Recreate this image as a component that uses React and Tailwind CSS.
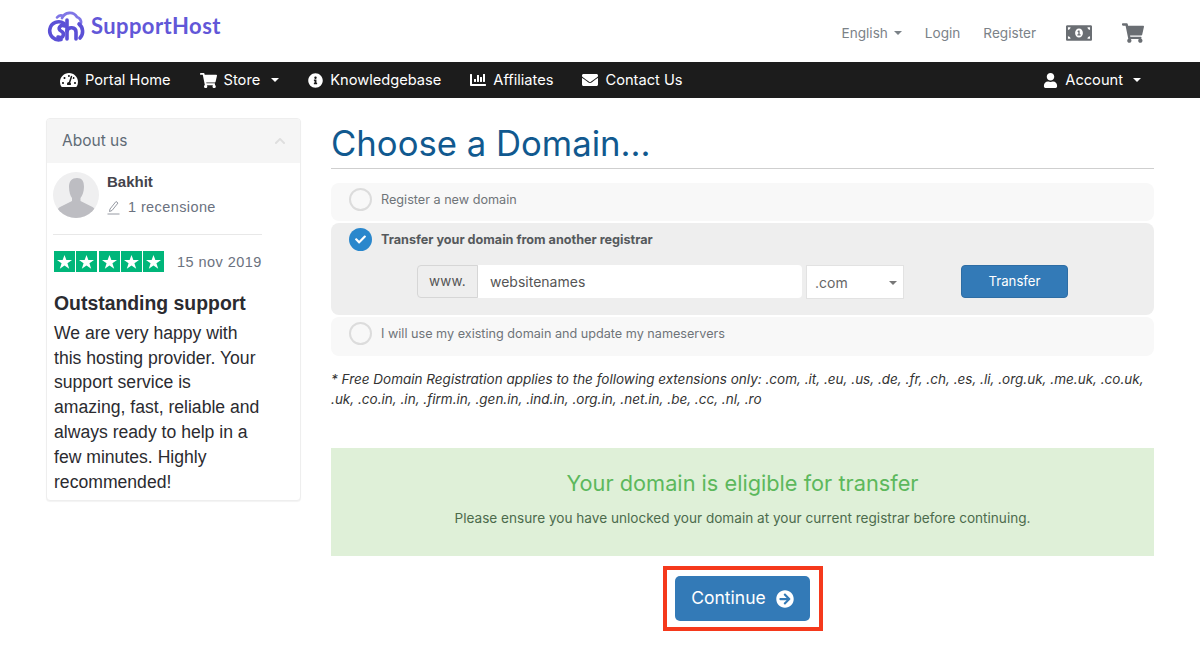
import { FaTachometerAlt, FaShoppingCart, FaInfoCircle, FaChartBar, FaEnvelope, FaUser, FaMoneyBillAlt, FaArrowCircleRight, FaCheck, FaChevronUp } from "react-icons/fa";

const navItems = [
  { label: "Portal Home", icon: FaTachometerAlt, size: 18 },
  { label: "Store", icon: FaShoppingCart, size: 17, caret: true },
  { label: "Knowledgebase", icon: FaInfoCircle, size: 15 },
  { label: "Affiliates", icon: FaChartBar, size: 16 },
  { label: "Contact Us", icon: FaEnvelope, size: 16 },
];

const reviewLines = [
  "We are very happy with",
  "this hosting provider. Your",
  "support service is",
  "amazing, fast, reliable and",
  "always ready to help in a",
  "few minutes. Highly",
  "recommended!",
];

function Caret({ className }) {
  return <span className={`inline-block w-0 h-0 border-x-[4px] border-x-transparent border-t-[4px] ${className}`} />;
}

function Logo() {
  return (
    <svg width="39" height="32" viewBox="0 0 39 32" fill="none" stroke="#5b50d6" strokeWidth="3.6" strokeLinecap="round">
      <path d="M11 7.500a5 5 0 0 1 5-2" stroke="#7f75e6" strokeWidth="2.6" />
      <path d="M16 8a8.500 8.500 0 0 1 15 -1 6 6 0 0 1 4 6" stroke="#7f75e6" strokeWidth="2.8" />
      <path d="M18 13.500a9 9 0 1 0 -3 16" />
      <path d="M19 16c-5-2-8 3-4 5s3 8-3 6" />
      <path d="M21 10v19" />
      <path d="M21 21c1-4.500 9-4.500 9 1v7" />
      <path d="M33 14a9.500 9.500 0 0 1 1 14" />
    </svg>
  );
}

function Radio({ checked }) {
  if (checked) {
    return (
      <span className="w-[23px] h-[23px] rounded-full bg-[#2a87cc] flex items-center justify-center shrink-0">
        <FaCheck size={11} color="#fff" />
      </span>
    );
  }
  return <span className="w-[23px] h-[23px] rounded-full bg-[#f8f8f8] border-2 border-[#dcdcdc] shrink-0" />;
}

function Avatar() {
  return (
    <svg width="46" height="46" viewBox="0 0 46 46" className="shrink-0">
      <clipPath id="avatar-clip"><circle cx="23" cy="23" r="23" /></clipPath>
      <circle cx="23" cy="23" r="23" fill="#efeff0" />
      <g clipPath="url(#avatar-clip)" fill="#bdbdc2">
        <path d="M16 15c0-6 3-9 8-9s7 3 7 9c0 5-2 9-3.500 11v3l12 6c3 2 4 6 4 11H3c0-5 1-9 4-11l12-6v-3c-1.500-2-3-6-3-11z" />
      </g>
    </svg>
  );
}

function Stars() {
  return (
    <div className="flex gap-[1.25px]">
      {[0, 1, 2, 3, 4].map((i) => (
        <span key={i} className="w-[21px] h-[21px] bg-[#00b67a] flex items-center justify-center">
          <svg width="15" height="15" viewBox="0 0 24 24" fill="#fff">
            <path d="M12 1.500l3 8h9l-7.300 5.300 2.800 8.700L12 18.200l-7.500 5.300 2.800-8.700L0 9.500h9z" />
          </svg>
        </span>
      ))}
    </div>
  );
}

function Sidebar() {
  return (
    <aside className="w-[255px] shrink-0 mt-5 h-[383px] bg-white border border-[#eeeeee] rounded-[4px] shadow-[0_1px_1px_rgba(0,0,0,0.05)] overflow-hidden">
      <div className="h-[44px] bg-[#f5f5f5] pl-[15px] pr-[14px] flex items-center justify-between">
        <span className="text-[15.5px] text-[#5f6b75]">About us</span>
        <FaChevronUp size={12} color="#dedede" />
      </div>
      <div className="px-[6px] pt-[9px]">
        <div className="flex gap-2 w-[209px] h-[63px] border-b border-[#e8e8e8]">
          <Avatar />
          <div className="pt-[1px]">
            <div className="text-[15px] leading-[18px] font-semibold text-[#44444c] font-['Liberation_Sans',sans-serif]">Bakhit</div>
            <div className="mt-[7px] flex items-center gap-2 text-[14.5px] leading-[18px] text-[#6b7280] tracking-[0.4px] font-['Liberation_Sans',sans-serif]">
              <svg width="13" height="15" viewBox="0 0 13 15" fill="none" stroke="#8a8f98" strokeWidth="0.9">
                <path d="M3 9l6-7.500 2 1.500-6 7.500-2.500 1z" />
                <path d="M0.500 14h12" />
              </svg>
              1 recensione
            </div>
          </div>
        </div>
        <div className="mt-[15px] ml-[1px] flex items-center gap-[13px]">
          <Stars />
          <span className="pt-[2px] text-[14.5px] text-[#6b7280] tracking-[0.45px] font-['Liberation_Sans',sans-serif]">15 nov 2019</span>
        </div>
        <h3 className="mt-[17px] ml-[1px] text-[19.4px] leading-[24px] font-bold text-[#2b2b30] font-['Liberation_Sans',sans-serif] whitespace-nowrap">Outstanding support</h3>
        <div className="mt-[6px] ml-[1px] text-[17.6px] leading-[24.8px] text-[#2b2b30] font-['Liberation_Sans',sans-serif] whitespace-nowrap">
          {reviewLines.map((line) => (
            <p key={line}>{line}</p>
          ))}
        </div>
      </div>
    </aside>
  );
}

function DomainOptions() {
  return (
    <div className="mt-[14px] flex flex-col gap-[2px]">
      <div className="h-[38px] bg-[#f8f8f8] rounded-lg pl-[18px] pt-[5px] flex items-start gap-[9px] text-[12.65px] leading-[24px] text-[#6f7478]">
        <Radio />
        Register a new domain
      </div>
      <div className="h-[92px] bg-[#eeeeee] rounded-lg pl-[18px] pt-[5px]">
        <div className="h-[23px] flex items-start gap-[9px] text-[12.65px] leading-[24px] font-bold text-[#55595c]">
          <Radio checked />
          Transfer your domain from another registrar
        </div>
        <div className="mt-[14px] ml-[68px] flex items-start">
          <span className="w-[61px] h-[33px] bg-[#eeeeee] border border-[#d6d6d6] rounded-l-[4px] flex items-center justify-center text-[13.5px] tracking-[0.2px] text-[#555]">www.</span>
          <span className="w-[324px] h-[33px] bg-white rounded-r-[4px] pl-3 flex items-center text-[14px] text-[#555]">websitenames</span>
          <span className="ml-1 w-[98px] h-[34px] bg-white border border-[#e2e2e2] pl-2 pr-[6px] flex items-center justify-between text-[14px] text-[#666]">
            .com
            <Caret className="border-t-[#777] mt-[1px]" />
          </span>
          <button className="ml-[57px] w-[107px] h-[33px] bg-[#337ab7] border border-[#2e6da4] rounded-[4px] text-[13.2px] text-white">Transfer</button>
        </div>
      </div>
      <div className="h-[39px] bg-[#f8f8f8] rounded-lg pl-[18px] pt-[5px] flex items-start gap-[9px] text-[12.65px] leading-[24px] text-[#6f7478]">
        <Radio />
        I will use my existing domain and update my nameservers
      </div>
    </div>
  );
}

export default function App() {
  return (
    <div className="w-[1200px] h-[654px] overflow-hidden bg-white font-['Inter',sans-serif]">
      <header className="h-[62px] pl-[46px] pr-[56px] flex justify-between">
        <div className="flex items-center gap-[6px] h-[52px]">
          <Logo />
          <span className="mb-[2px] text-[22px] font-bold text-[#6257d8] font-['Lato',sans-serif] tracking-[0.4px]">SupportHost</span>
        </div>
        <div className="flex items-center text-[13.6px] text-[#7b8288] h-[66px]">
          <span>English</span>
          <Caret className="ml-[6px] border-t-[#7b8288]" />
          <span className="ml-[23px]">Login</span>
          <span className="ml-[23px]">Register</span>
          <FaMoneyBillAlt size={26} color="#6a6e73" className="ml-[30px]" />
          <FaShoppingCart size={22} color="#6a6e73" className="ml-[30px]" />
        </div>
      </header>

      <nav className="h-[36px] bg-[#1c1c1c] pl-[60px] pr-[59px] pt-[1px] flex items-center justify-between text-[14.65px] text-white">
        <div className="flex items-center gap-[29px]">
          {navItems.map(({ label, icon: Icon, size, caret }) => (
            <div key={label} className="flex items-center gap-[7px]">
              <Icon size={size} />
              <span>{label}</span>
              {caret && <Caret className="ml-[4px] border-t-white" />}
            </div>
          ))}
        </div>
        <div className="flex items-center gap-[7px]">
          <FaUser size={15} />
          <span>Account</span>
          <Caret className="ml-[3px] border-t-white" />
        </div>
      </nav>

      <main className="pl-[46px] pr-[46px] flex gap-[30px]">
        <Sidebar />
        <section className="flex-1 mt-[20px]">
          <h1 className="h-[51px] border-b border-[#cfcfcf] text-[34.7px] leading-[50px] text-[#11598f]">Choose a Domain...</h1>
          <DomainOptions />
          <p className="mt-[13px] text-[13.5px] leading-[20px] italic text-[#333]">
            * Free Domain Registration applies to the following extensions only: .com, .it, .eu, .us, .de, .fr, .ch, .es, .li, .org.uk, .me.uk, .co.uk, .uk, .co.in, .in, .firm.in, .gen.in, .ind.in, .org.in, .net.in, .be, .cc, .nl, .ro
          </p>
          <div className="mt-[39px] h-[108px] bg-[#dff0d8] flex flex-col items-center pt-[20px]">
            <div className="text-[21.75px] leading-[30px] text-[#5cb85c]">Your domain is eligible for transfer</div>
            <div className="mt-[10px] text-[13.6px] leading-[20px] text-[#4c6b4c]">Please ensure you have unlocked your domain at your current registrar before continuing.</div>
          </div>
          <div className="mt-[10px] flex justify-center">
            <div className="border-4 border-[#f5391c] pl-[8px] pr-[9px] py-[6px]">
              <button className="w-[135px] h-[45px] pl-[1px] bg-[#337ab7] rounded-[5px] flex items-center justify-center gap-[10px] text-[17.5px] text-white">
                Continue
                <FaArrowCircleRight size={18} />
              </button>
            </div>
          </div>
        </section>
      </main>
    </div>
  );
}
